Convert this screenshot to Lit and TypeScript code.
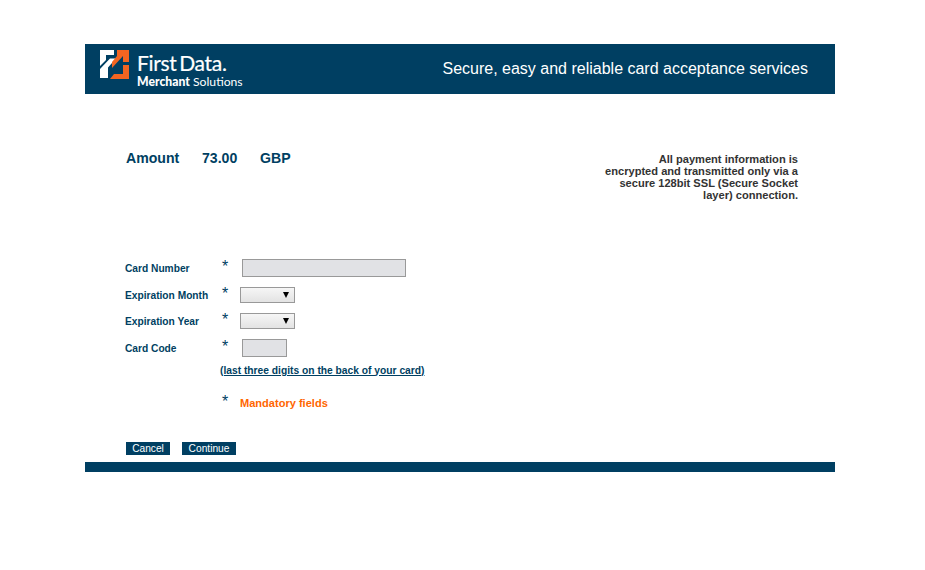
import { LitElement, html, css } from "lit";
import { customElement } from "lit/decorators.js";

@customElement("app-root")
export class AppRoot extends LitElement {
  static styles = css`
    :host { display: block; font-family: "Liberation Sans", Arial, sans-serif; color: #003f62; }
    .page { width: 750px; margin: 44px 0 0 85px; }
    .header { height: 50px; background: #003f62; display: flex; justify-content: space-between; align-items: center; padding: 0 27px 0 15px; }
    .logo { display: flex; gap: 7px; align-self: flex-start; padding-top: 6px; }
    .mark { display: block; width: 30px; height: 30px; }
    .brand { display: flex; flex-direction: column; color: #fff; font-family: Lato, sans-serif; padding-top: 1px; }
    .fd { font-size: 21px; line-height: 24px; letter-spacing: -0.3px; word-spacing: -2.5px; -webkit-text-stroke: 0.2px #fff; }
    .ms { font-size: 12.2px; line-height: 13px; }
    .ms b { font-weight: 900; }
    .tag { color: #fff; font-size: 16px; }
    .top { display: flex; justify-content: space-between; height: 161px; box-sizing: border-box; padding: 56px 37px 0 41px; }
    .amount { display: flex; font-size: 14.1px; font-weight: 700; line-height: 16px; }
    .amt-label { width: 76px; }
    .amt-value { width: 58px; }
    .secure { margin-top: 3px; text-align: right; font-size: 11.1px; font-weight: 700; line-height: 12px; color: #333; }
    .form { display: grid; grid-template-columns: 95px 20px 1fr; grid-template-rows: 26px 28px 24px 30px 14px 17px 18px; align-items: center; padding-left: 40px; font-size: 10.2px; font-weight: 700; }
    .star { font-size: 16px; font-weight: 400; line-height: 16px; margin: -3px 0 0 2px; }
    .field { background: #e1e2e5; border: 1px solid #999; box-sizing: border-box; height: 18px; padding: 0; margin: 0 0 0 2px; display: block; }
    .num { width: 164px; }
    .code { width: 45px; }
    .sel { position: relative; width: 55px; height: 16px; }
    .sel::after { content: ""; position: absolute; top: 5px; right: 6.5px; border-style: solid; border-width: 6px 3.5px 0; border-color: #000 transparent transparent; pointer-events: none; }
    select { appearance: none; width: 55px; height: 16px; display: block; border: 1px solid #999; border-radius: 0; padding: 0; margin: 0; font-size: 10px; box-sizing: border-box; background: linear-gradient(#f6f6f6, #e3e3e3); }
    .hint { grid-column: 2 / 4; color: #003f62; font-size: 10.25px; }
    .gap { grid-column: 1 / 4; }
    .mand { color: #f60; font-size: 11.05px; }
    .actions { display: flex; gap: 12px; padding: 30px 0 0 41px; }
    button { background: #003f62; color: #fff; border: 0; padding: 0; height: 13px; font: 400 10.2px/13px "Liberation Sans", Arial, sans-serif; display: block; }
    .cancel { width: 44px; }
    .cont { width: 54px; }
    .footer { height: 10px; background: #003f62; margin-top: 7px; }
  `;

  render() {
    return html`<div class="page">
      <div class="header">
        <div class="logo">
          <svg class="mark" viewBox="0 0 30 30" aria-hidden="true">
            <path fill="#fff" d="M0 0H14V5H6V10L0 16Z" />
            <path fill="#fff" d="M0 19L10 8.5H16L8 17.5V28H0Z" />
            <path fill="#f26522" d="M17 0H29V12H23V6L12 18V12L17 6Z" />
            <path fill="#f26522" d="M23 15H29V29H10L14 24H23Z" />
          </svg>
          <div class="brand">
            <span class="fd">First Data.</span>
            <span class="ms"><b>Merchant</b> Solutions</span>
          </div>
        </div>
        <div class="tag">Secure, easy and reliable card acceptance services</div>
      </div>
      <div class="top">
        <div class="amount"><span class="amt-label">Amount</span><span class="amt-value">73.00</span><span>GBP</span></div>
        <div class="secure">All payment information is<br />encrypted and transmitted only via a<br />secure 128bit SSL (Secure Socket<br />layer) connection.</div>
      </div>
      <div class="form">
        <span>Card Number</span><span class="star">*</span><input class="field num" />
        <span>Expiration Month</span><span class="star">*</span><div class="sel"><select><option></option></select></div>
        <span>Expiration Year</span><span class="star">*</span><div class="sel"><select><option></option></select></div>
        <span>Card Code</span><span class="star">*</span><input class="field code" />
        <span></span><a class="hint" href="#">(last three digits on the back of your card)</a>
        <div class="gap"></div>
        <span></span><span class="star">*</span><span class="mand">Mandatory fields</span>
      </div>
      <div class="actions">
        <button class="cancel">Cancel</button>
        <button class="cont">Continue</button>
      </div>
      <div class="footer"></div>
    </div>`;
  }
}
